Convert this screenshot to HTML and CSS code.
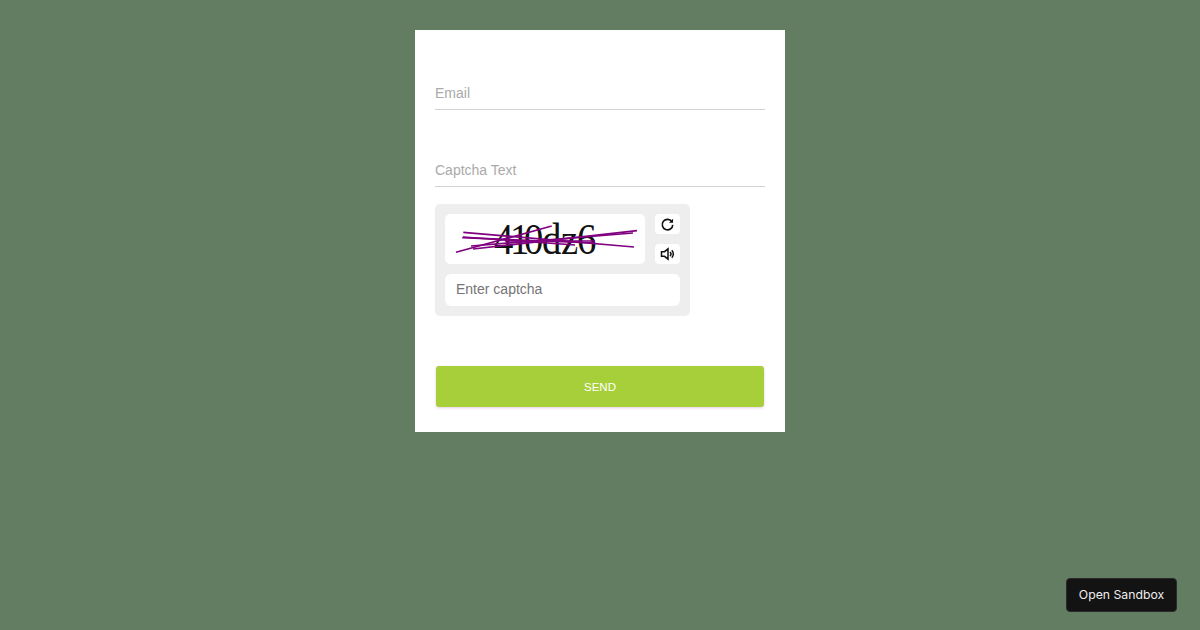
FILE: index.html
```html
<!DOCTYPE html>
<html lang="en">
<head>
<meta charset="utf-8">
<title>Captcha form</title>
<link rel="stylesheet" href="styles.css">
</head>
<body>
<main class="card">
  <div class="field"><span class="label">Email</span></div>
  <div class="field"><span class="label">Captcha Text</span></div>
  <div class="captcha">
    <div class="captcha-top">
      <svg class="captcha-image" viewBox="0 0 200 50" width="200" height="50">
        <text class="captcha-text" transform="scale(0.88 1)" x="55.700 73.900 89.800 110.200 131.800 150" y="40.500">410dz6</text>
        <g class="noise">
          <line x1="11" y1="38.300" x2="106.700" y2="12"/>
          <line x1="18.300" y1="18.300" x2="189" y2="33"/>
          <line x1="17.300" y1="23.700" x2="150" y2="29"/>
          <line x1="28" y1="35" x2="192" y2="16.700"/>
          <line x1="26" y1="32" x2="188" y2="19"/>
          <line x1="18" y1="23" x2="130" y2="31"/>
          <line x1="60" y1="27" x2="150" y2="27"/>
        </g>
      </svg>
      <div class="captcha-buttons">
        <span class="icon-btn">
          <svg viewBox="0 0 16 16" width="15" height="15"><path class="stroke" d="M12.700 5.100A5.600 5.600 0 1 0 13.600 8.400"/><path class="solid" d="M13.900 1.900V6.200H9.600z"/></svg>
        </span>
        <span class="icon-btn">
          <svg viewBox="0 0 16 16" width="16" height="16"><path class="stroke thin" d="M1.500 5.700H4.500L8 2.800V13.200L4.500 10.300H1.500z"/><path class="stroke thin" d="M10 5.900A3 3 0 0 1 10 10.100M11.800 4.300A5.300 5.300 0 0 1 11.800 11.700"/></svg>
        </span>
      </div>
    </div>
    <div class="captcha-input">Enter captcha</div>
  </div>
  <button class="send" type="button">SEND</button>
</main>
<a class="sandbox">Open Sandbox</a>
</body>
</html>
```
FILE: styles.css
```css
* { box-sizing: border-box; }
html, body { height: 100%; }
body {
  margin: 0;
  height: 630px;
  overflow: hidden;
  background: #637d62;
  font-family: "Liberation Sans", Arial, sans-serif;
}
.card {
  width: 370px;
  height: 402px;
  margin: 30px auto 0;
  padding: 40px 20px 0;
  background: #fff;
  display: flex;
  flex-direction: column;
}
.field {
  height: 40px;
  margin-bottom: 37px;
  padding-bottom: 8px;
  display: flex;
  align-items: flex-end;
  border-bottom: 1px solid #d2d2d2;
}
.label { font-size: 14px; line-height: 16px; color: #aaa; }
.field + .field { margin-bottom: 17px; }
.captcha {
  width: 255px;
  height: 112px;
  padding: 10px;
  border-radius: 5px;
  background: #eee;
  display: flex;
  flex-direction: column;
  gap: 10px;
}
.captcha-top { display: flex; gap: 10px; }
.captcha-image { display: block; background: #fff; border-radius: 5px; }
.captcha-text {
  font-family: "Liberation Serif", serif;
  font-size: 44px;
  fill: #111;
}
.noise line { stroke: #800080; stroke-width: 1.700; }
.captcha-buttons { display: flex; flex-direction: column; gap: 10px; }
.icon-btn {
  width: 25px;
  height: 20px;
  border-radius: 4px;
  background: #fff;
  display: flex;
  align-items: center;
  justify-content: center;
}
.stroke { fill: none; stroke: #111; stroke-width: 1.700; }
.thin { stroke-width: 1.500; }
.solid { fill: #111; }
.captcha-input {
  height: 32px;
  padding-left: 11px;
  border-radius: 6px;
  background: #fff;
  font-size: 14px;
  line-height: 30px;
  color: #757575;
}
.send {
  width: 328px;
  height: 41px;
  margin: 50px 0 0 1px;
  border: 0;
  border-radius: 3px;
  background: #a7cf3a;
  color: #fff;
  font-family: inherit;
  font-size: 11.500px;
  box-shadow: 0 1px 3px rgba(128, 0, 128, 0.2);
}
.sandbox {
  position: fixed;
  right: 23px;
  bottom: 18px;
  width: 111px;
  height: 34px;
  border: 1px solid #2b2b2b;
  border-radius: 4px;
  background: #131313;
  color: #eee;
  font-family: Inter, sans-serif;
  font-size: 12.250px;
  line-height: 32px;
  text-align: center;
}
```
